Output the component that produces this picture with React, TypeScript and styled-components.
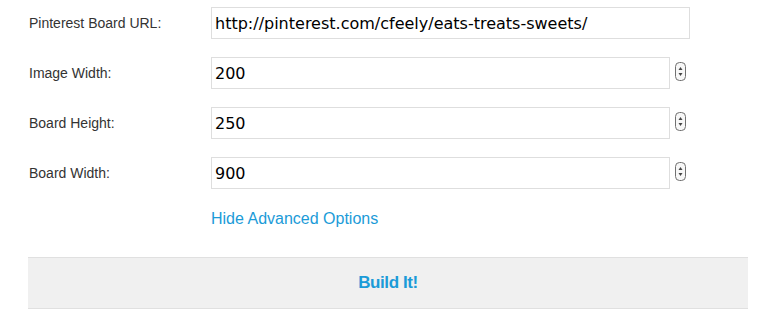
import {ReactElement} from "react";
import styled, {createGlobalStyle} from "styled-components";

const GlobalStyle = createGlobalStyle`
    html, body {
        margin: 0;
        padding: 0;
        background: #ffffff;
    }
`

interface Field {
    label: string;
    value: string;
    numeric?: boolean;
}

const fields: Field[] = [
    {label: "Pinterest Board URL:", value: "http://pinterest.com/cfeely/eats-treats-sweets/"},
    {label: "Image Width:", value: "200", numeric: true},
    {label: "Board Height:", value: "250", numeric: true},
    {label: "Board Width:", value: "900", numeric: true},
];

const StyledForm = styled.form`
    display: flex;
    flex-direction: column;
    padding: 7px 27px 0 28px;
    font-family: "Liberation Sans", Arial, sans-serif;
`

const StyledRow = styled.div`
    display: flex;
    align-items: center;
    height: 32px;
    margin-bottom: 18px;
`

const StyledLabel = styled.label`
    width: 182px;
    flex: none;
    padding-left: 1px;
    font-size: 14px;
    color: #333333;
    margin-top: -1px;
`

const StyledInput = styled.div<{ $numeric?: boolean }>`
    box-sizing: border-box;
    width: ${props => props.$numeric ? "459px" : "479px"};
    height: 32px;
    border: 1px solid #dedede;
    display: flex;
    align-items: center;
    padding: 1px 0 0 3px;
    font-family: "DejaVu Sans", Verdana, sans-serif;
    font-size: 16px;
    color: #000000;
    white-space: nowrap;
`

const StyledSpinner = styled.svg`
    margin-left: 5px;
    margin-top: -4px;
    flex: none;
`

const StyledLink = styled.a`
    align-self: flex-start;
    margin: 2px 0 0 183px;
    font-size: 16px;
    color: #1b9bd8;
    text-decoration: none;
    line-height: 20px;
`

const StyledButton = styled.button`
    margin-top: 28px;
    height: 52px;
    width: 100%;
    border: none;
    border-top: 1px solid #e0e0e0;
    border-bottom: 1px solid #e0e0e0;
    background: #f0f0f0;
    font-family: "Liberation Sans", Arial, sans-serif;
    font-weight: bold;
    font-size: 17px;
    letter-spacing: -0.4px;
    color: #1b9bd8;
    padding: 0;
    cursor: pointer;
`

const Spinner = (): ReactElement => (
    <StyledSpinner width="11" height="19" viewBox="0 0 11 19">
        <rect x="0.5" y="0.5" width="10" height="18" rx="4" fill="#f7f7f7" stroke="#707070"/>
        <path d="M5.5 5 L7.5 8 L3.5 8 Z" fill="#444444"/>
        <path d="M5.5 14 L7.5 11 L3.5 11 Z" fill="#444444"/>
    </StyledSpinner>
)

const App = (): ReactElement => {
    return (
        <>
            <GlobalStyle/>
            <StyledForm onSubmit={e => e.preventDefault()}>
                {fields.map(field => (
                    <StyledRow key={field.label}>
                        <StyledLabel>{field.label}</StyledLabel>
                        <StyledInput $numeric={field.numeric}>{field.value}</StyledInput>
                        {field.numeric && <Spinner/>}
                    </StyledRow>
                ))}
                <StyledLink href="#">Hide Advanced Options</StyledLink>
                <StyledButton type="submit">Build It!</StyledButton>
            </StyledForm>
        </>
    )
}

export default App;
